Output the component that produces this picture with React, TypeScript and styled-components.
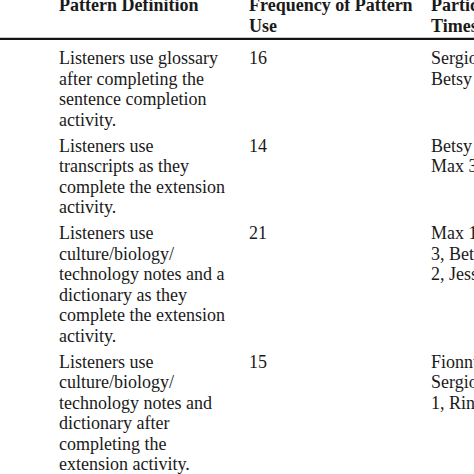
import React from 'react'
import styled, { createGlobalStyle } from 'styled-components'

interface Pattern {
  id: number
  definition: string
  frequency: number
  participants: string[]
}

const patterns: Pattern[] = [
  {
    id: 1,
    definition: 'Listeners use glossary after completing the sentence completion activity.',
    frequency: 16,
    participants: ['Sergio 7, Jessica 4,', 'Betsy 3, Max 2']
  },
  {
    id: 2,
    definition: 'Listeners use transcripts as they complete the extension activity.',
    frequency: 14,
    participants: ['Betsy 6, Jessica 4,', 'Max 3, Sergio 1']
  },
  {
    id: 3,
    definition:
      'Listeners use culture/biology/ technology notes and a dictionary as they complete the extension activity.',
    frequency: 21,
    participants: ['Max 11, Fionnuala', '3, Betsy 3, Sergio', '2, Jessica 2']
  },
  {
    id: 4,
    definition:
      'Listeners use culture/biology/ technology notes and dictionary after completing the extension activity.',
    frequency: 15,
    participants: ['Fionnuala 10,', 'Sergio 3, Max', '1, Rina 1']
  }
]

const GlobalStyle = createGlobalStyle`
  html, body {
    margin: 0;
    padding: 0;
    background: #ffffff;
    overflow: hidden;
  }
  body {
    width: 474px;
    height: 474px;
  }
`

const COLUMNS = '59px 190px 182px 150px'

const Table = styled.div`
  width: 474px;
  height: 474px;
  overflow: hidden;
  font-family: 'Liberation Serif', 'Times New Roman', serif;
  font-size: 18px;
  line-height: 20.5px;
  color: #1a1a1a;
`

const HeaderRow = styled.div`
  display: grid;
  grid-template-columns: ${COLUMNS};
  margin-top: -5px;
  padding-bottom: 2px;
  border-bottom: 2px solid #141414;
  box-shadow: 0 -1px 0 #c8c8c8 inset;
  width: 620px;
`

const HeadCell = styled.div`
  font-weight: bold;
  padding-right: 12px;
`

const Row = styled.div<{ $first?: boolean }>`
  display: grid;
  grid-template-columns: ${COLUMNS};
  padding-top: ${({ $first }) => ($first ? '8px' : '5.5px')};
  width: 620px;
`

const Cell = styled.div`
  padding-right: 20px;
`

const Line = styled.div`
  white-space: nowrap;
`

export default function App() {
  return (
    <>
      <GlobalStyle />
      <Table>
        <HeaderRow>
          <HeadCell />
          <HeadCell>Pattern Definition</HeadCell>
          <HeadCell>Frequency of Pattern Use</HeadCell>
          <HeadCell>
            <Line>Participants (Number of</Line>
            <Line>Times)</Line>
          </HeadCell>
        </HeaderRow>
        {patterns.map((p, i) => (
          <Row key={p.id} $first={i === 0}>
            <Cell />
            <Cell>{p.definition}</Cell>
            <Cell>{p.frequency}</Cell>
            <Cell>
              {p.participants.map(line => (
                <Line key={line}>{line}</Line>
              ))}
            </Cell>
          </Row>
        ))}
      </Table>
    </>
  )
}
